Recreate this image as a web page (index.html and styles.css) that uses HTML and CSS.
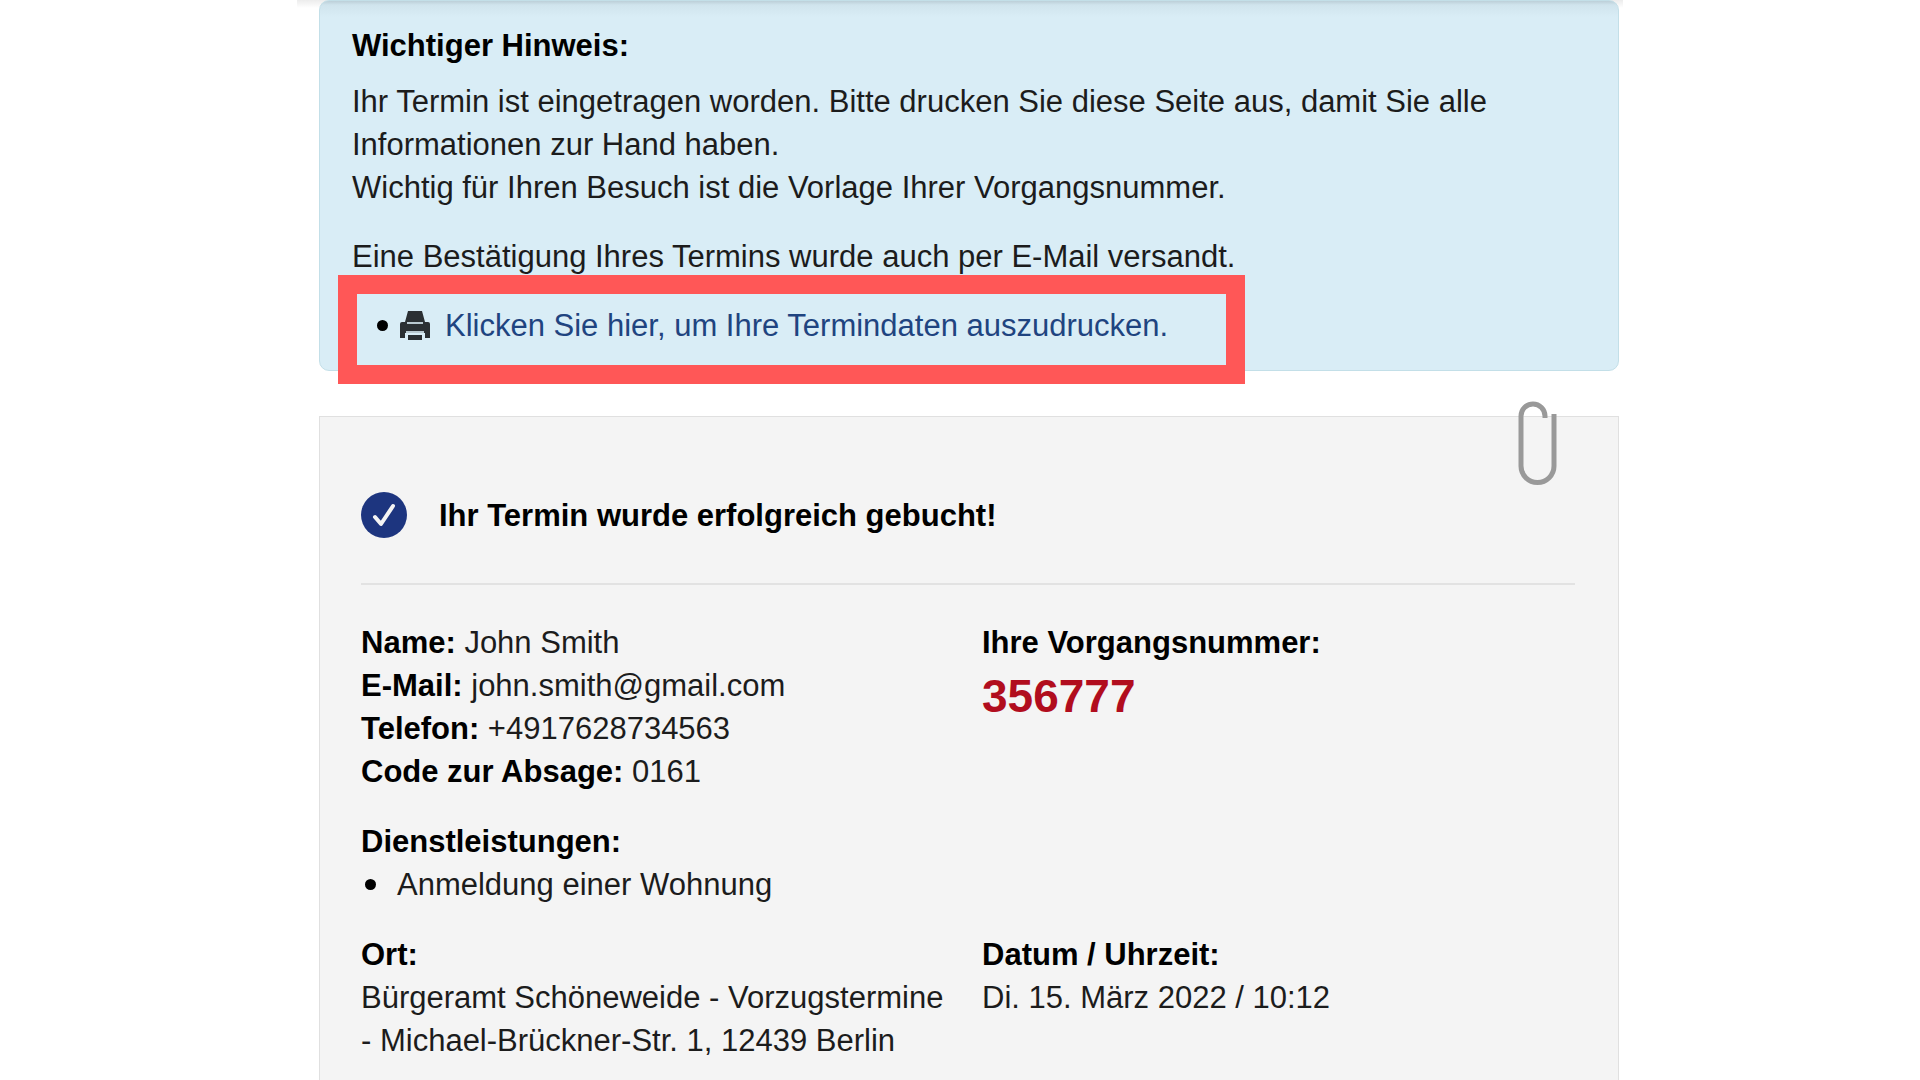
FILE: index.html
```html
<!DOCTYPE html>
<html lang="de">
<head>
<meta charset="utf-8">
<title>Terminbestätigung</title>
<link rel="stylesheet" href="styles.css">
</head>
<body>
<main class="page">
  <section class="notice">
    <h2 class="heading">Wichtiger Hinweis:</h2>
    <p class="notice-text">Ihr Termin ist eingetragen worden. Bitte drucken Sie diese Seite aus, damit Sie alle Informationen zur Hand haben.<br>Wichtig für Ihren Besuch ist die Vorlage Ihrer Vorgangsnummer.</p>
    <p class="notice-text">Eine Bestätigung Ihres Termins wurde auch per E-Mail versandt.</p>
    <ul class="actions">
      <li class="action">
        <svg class="printer" viewBox="0 0 30 30" aria-hidden="true">
          <path fill="#2b3033" d="M8 0h14l3 11H5zM2 11h26q2 0 2 2v14h-5v-5H5v5H0V13q0-2 2-2zM8 24h14v5H8z"/>
          <path fill="#b9c9d0" d="M7 11h16v2H7zM6 20h18v2H6z"/>
        </svg>
        <a class="print-link" href="#drucken">Klicken Sie hier, um Ihre Termindaten auszudrucken.</a>
        <span class="highlight"></span>
      </li>
    </ul>
  </section>

  <section class="card">
    <svg class="clip" viewBox="0 0 40 86" aria-hidden="true">
      <path fill="none" stroke="#999" stroke-width="5" d="M27 17v-2a12 12 0 0 0-24 0V65a16 16 0 0 0 33 0V13"/>
    </svg>
    <header class="card-head">
      <svg class="check" viewBox="0 0 46 46" aria-hidden="true">
        <circle cx="23" cy="23" r="23" fill="#1d357f"/>
        <path fill="none" stroke="#f4f4f4" stroke-width="4" stroke-linecap="round" stroke-linejoin="round" d="M14 25l6 7L32 14"/>
      </svg>
      <h1 class="heading">Ihr Termin wurde erfolgreich gebucht!</h1>
    </header>
    <div class="details">
      <div class="block">
        <p><strong>Name:</strong> John Smith</p>
        <p><strong>E-Mail:</strong> john.smith@gmail.com</p>
        <p><strong>Telefon:</strong> +4917628734563</p>
        <p><strong>Code zur Absage:</strong> 0161</p>
      </div>
      <div class="block">
        <h2 class="heading">Ihre Vorgangsnummer:</h2>
        <p class="number">356777</p>
      </div>
      <div class="block wide">
        <h2 class="heading">Dienstleistungen:</h2>
        <ul class="services">
          <li class="service">Anmeldung einer Wohnung</li>
        </ul>
      </div>
      <div class="block">
        <h2 class="heading">Ort:</h2>
        <p>Bürgeramt Schöneweide - Vorzugstermine - Michael-Brückner-Str. 1, 12439 Berlin</p>
      </div>
      <div class="block">
        <h2 class="heading">Datum / Uhrzeit:</h2>
        <p>Di. 15. März 2022 / 10:12</p>
      </div>
    </div>
  </section>
</main>
</body>
</html>
```
FILE: styles.css
```css
* {
  box-sizing: border-box;
}

body {
  margin: 0;
  background: #fff;
  color: #1c1c1c;
  font: 31px/43px "Liberation Sans", Arial, sans-serif;
}

h1,
h2,
p,
ul {
  margin: 0;
  padding: 0;
}

ul {
  list-style: none;
}

.heading,
strong {
  color: #000;
  font-size: 31px;
  font-weight: bold;
}

/* Centred column with the soft shadow of the bar above it */
.page {
  display: flex;
  flex-direction: column;
  gap: 45px;
  max-width: 1326px;
  min-height: 100vh;
  margin: 0 auto;
  padding: 0 4px 0 22px;
  background: linear-gradient(#ececec, #fff 8px);
}

.notice {
  display: flex;
  flex-direction: column;
  gap: 26px;
  padding: 23px 32px;
  border: 1px solid #c3dfe8;
  border-radius: 10px;
  background: linear-gradient(#bccfd8, #d0e4ed 4px, #d9edf6 16px);
}

.notice .heading {
  margin-bottom: -13px;
}

.action {
  display: flex;
  align-items: center;
  position: relative;
  padding-left: 25px;
}

.action::before,
.service::before {
  content: "";
  flex: none;
  width: 11px;
  height: 11px;
  border-radius: 50%;
  background: #000;
}

.printer {
  flex: none;
  width: 30px;
  height: 30px;
  margin: 0 15px 0 12px;
}

.print-link {
  color: #1f4480;
  text-decoration: none;
}

/* Marker frame laid over the print link */
.highlight {
  position: absolute;
  top: -29px;
  left: -14px;
  width: 907px;
  height: 109px;
  border: 19px solid #ff5757;
  pointer-events: none;
}

.card {
  flex: 1;
  position: relative;
  padding: 75px 43px 16px 41px;
  border: 1px solid #e0e0e0;
  border-bottom: 0;
  background: #f4f4f4;
}

.clip {
  position: absolute;
  top: -16px;
  right: 60px;
  width: 40px;
  height: 86px;
}

.card-head {
  display: flex;
  align-items: center;
  gap: 32px;
  padding-bottom: 45px;
  border-bottom: 2px solid #e2e2e2;
}

.check {
  flex: none;
  width: 46px;
  height: 46px;
}

.details {
  display: grid;
  grid-template-columns: 597fr 593fr;
  gap: 27px 24px;
  padding-top: 36px;
}

.wide {
  grid-column: 1 / -1;
}

.number {
  color: #b10d1e;
  font-size: 46px;
  font-weight: bold;
  line-height: 64px;
}

.service {
  display: flex;
  align-items: center;
  gap: 21px;
  padding-left: 4px;
}
```
